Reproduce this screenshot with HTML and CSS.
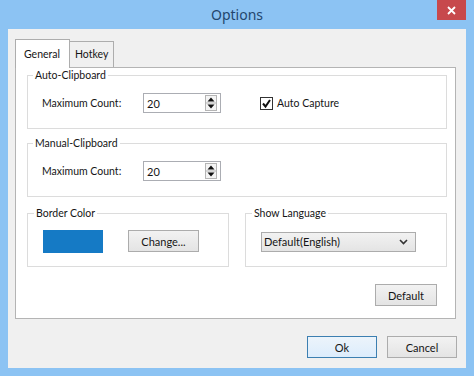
FILE: index.html
```html
<!DOCTYPE html>
<html lang="en">
<head>
    <meta charset="UTF-8">
    <meta name="viewport" content="width=device-width, initial-scale=1.0">
    <title>Options</title>
    <link rel="stylesheet" href="styles.css">
</head>
<body>
    <div class="window">
        <!-- Barra de titulo -->
        <div class="titlebar">
            <span></span>
            <span class="title">Options</span>
            <span class="close">
                <svg width="9" height="9" viewBox="0 0 9 9">
                    <path d="M1 1 L8 8 M8 1 L1 8" stroke="#fff" stroke-width="1.8"/>
                </svg>
            </span>
        </div>

        <div class="client">
            <div class="tabs">
                <span class="tab active">General</span>
                <span class="tab">Hotkey</span>
            </div>

            <div class="pane">
                <fieldset class="group group-wide">
                    <legend>Auto-Clipboard</legend>
                    <div class="row">
                        <span class="label">Maximum Count:</span>
                        <div class="spin">
                            <span class="value">20</span>
                            <svg class="arrows" width="12" height="16" viewBox="0 0 12 16">
                                <rect x="0.5" y="0.5" width="11" height="15" fill="#f4f4f4" stroke="#b5b5b5"/>
                                <line x1="1" y1="8" x2="11" y2="8" stroke="#b5b5b5"/>
                                <path d="M6 2.5 L9.5 6.5 L2.5 6.5 Z" fill="#111"/>
                                <path d="M6 13.5 L9.5 9.5 L2.5 9.5 Z" fill="#111"/>
                            </svg>
                        </div>
                        <label class="check">
                            <span class="box">
                                <svg width="11" height="11" viewBox="0 0 11 11">
                                    <path d="M2 5.5 L4.5 8.5 L9 2" fill="none" stroke="#111" stroke-width="2"/>
                                </svg>
                            </span>
                            Auto Capture
                        </label>
                    </div>
                </fieldset>

                <fieldset class="group group-wide">
                    <legend>Manual-Clipboard</legend>
                    <div class="row">
                        <span class="label">Maximum Count:</span>
                        <div class="spin">
                            <span class="value">20</span>
                            <svg class="arrows" width="12" height="16" viewBox="0 0 12 16">
                                <rect x="0.5" y="0.5" width="11" height="15" fill="#f4f4f4" stroke="#b5b5b5"/>
                                <line x1="1" y1="8" x2="11" y2="8" stroke="#b5b5b5"/>
                                <path d="M6 2.5 L9.5 6.5 L2.5 6.5 Z" fill="#111"/>
                                <path d="M6 13.5 L9.5 9.5 L2.5 9.5 Z" fill="#111"/>
                            </svg>
                        </div>
                    </div>
                </fieldset>

                <div class="pair">
                    <fieldset class="group">
                        <legend>Border Color</legend>
                        <div class="row">
                            <span class="swatch"></span>
                            <button class="btn btn-change">Change...</button>
                        </div>
                    </fieldset>
                    <fieldset class="group">
                        <legend>Show Language</legend>
                        <div class="row">
                            <div class="combo">
                                <span>Default(English)</span>
                                <svg width="9" height="6" viewBox="0 0 9 6">
                                    <path d="M1 1 L4.5 4.5 L8 1" fill="none" stroke="#333" stroke-width="1.6"/>
                                </svg>
                            </div>
                        </div>
                    </fieldset>
                </div>

                <div class="pane-footer">
                    <button class="btn btn-default">Default</button>
                </div>
            </div>

            <div class="footer">
                <button class="btn btn-ok">Ok</button>
                <button class="btn">Cancel</button>
            </div>
        </div>
    </div>
</body>
</html>
```

FILE: styles.css
```css
/* Janela */
body {
    margin: 0;
    font-family: Lato, "Liberation Sans", Arial, sans-serif;
    font-size: 10.5px;
    line-height: 15px;
    color: #151515;
}

.window {
    width: 474px;
    height: 376px;
    background: #8cc3f3;
    display: flex;
    flex-direction: column;
}

.titlebar {
    height: 29px;
    display: grid;
    grid-template-columns: 1fr auto 1fr;
    align-items: start;
}

.title {
    font-family: "Noto Sans", sans-serif;
    font-size: 14px;
    color: #23466d;
    line-height: 30px;
}

.close {
    justify-self: end;
    margin-right: 8px;
    width: 29px;
    height: 20px;
    background: #c7494c;
    display: flex;
    align-items: center;
    justify-content: center;
}

.client {
    margin: 0 8px 8px;
    flex: 1;
    background: #f0f0f0;
    padding: 9px 10px 0 7px;
}

/* Abas */
.tabs {
    display: flex;
    align-items: flex-end;
    height: 29px;
}

.tab {
    border: 1px solid #adadad;
    border-bottom: none;
    padding: 0 5px;
    line-height: 25px;
    background: #f0f0f0;
}

.tab + .tab {
    border-left: none;
}

.tab.active {
    background: #fff;
    line-height: 28px;
    padding: 0 9px 0 8px;
    margin-bottom: -1px;
    position: relative;
}

.pane {
    height: 250px;
    background: #fff;
    border: 1px solid #b4b4b4;
    padding: 0 8px 0 11px;
}

/* Grupos */
.group {
    margin: 0;
    border: 1px solid #dcdcdc;
    padding: 0 0 0 14px;
    min-width: 0;
}

.group legend {
    padding: 0 2px;
    margin-left: -9px;
    line-height: 15px;
}

.group-wide {
    margin-bottom: 7px;
}

.row {
    display: flex;
    align-items: center;
    height: 20px;
    padding: 10px 0 15px;
}

.label {
    width: 101px;
}

.spin {
    width: 70px;
    height: 18px;
    border: 1px solid #abadb3;
    display: flex;
    align-items: center;
    justify-content: space-between;
    padding: 0 3px 0 3px;
    font-size: 11px;
}

.check {
    margin-left: 39px;
    display: flex;
    align-items: center;
    gap: 4px;
}

.box {
    width: 11px;
    height: 11px;
    border: 1px solid #333;
    display: flex;
}

.pair {
    display: flex;
    gap: 16px;
    margin-top: 9px;
}

.pair .group {
    flex: 1;
    padding-left: 15px;
}

.swatch {
    width: 60px;
    height: 23px;
    background: #157ac5;
}

/* Botoes */
.btn {
    font-family: inherit;
    font-size: 11px;
    color: #151515;
    height: 22px;
    width: 71px;
    padding: 0;
    border: 1px solid #acacac;
    background: linear-gradient(#f2f2f2, #e4e4e4);
}

.btn-change {
    margin-left: 25px;
}

.combo {
    margin-top: 1px;
    width: 155px;
    height: 20px;
    border: 1px solid #acacac;
    background: linear-gradient(#f2f2f2, #e4e4e4);
    display: flex;
    align-items: center;
    justify-content: space-between;
    padding: 0 7px 0 2px;
    box-sizing: border-box;
    font-size: 11px;
}

.pane-footer {
    display: flex;
    justify-content: flex-end;
    padding: 17px 10px 0 0;
}

.btn-default {
    width: 62px;
}

.footer {
    display: flex;
    justify-content: flex-end;
    gap: 10px;
    margin: 17px -1px 0 0;
}

.footer .btn {
    width: 70px;
}

.btn-ok {
    border-color: #3c7fb1;
    background: linear-gradient(#ecf4fb, #dcecfc);
}
```
